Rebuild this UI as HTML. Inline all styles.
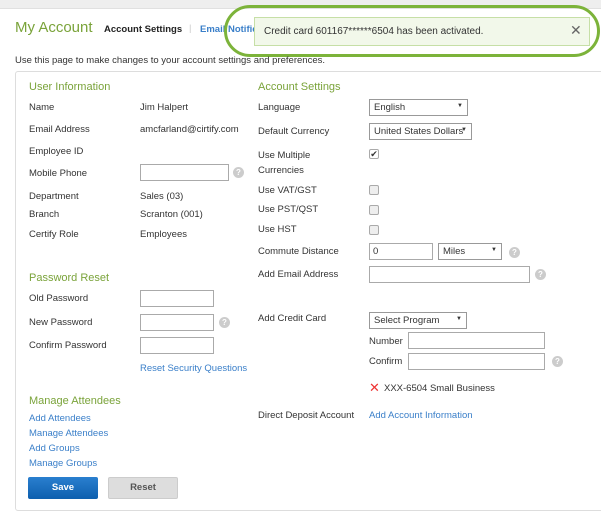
<!DOCTYPE html>
<html><head><style>
*{margin:0;padding:0;box-sizing:border-box}
body{width:601px;height:505px;background:#fff;font-family:"Liberation Sans",sans-serif;font-size:9.5px;color:#333;position:relative;overflow:hidden}
.a{position:absolute;white-space:nowrap}
.g{color:#7aa33a;font-size:11px}
.l{color:#3a7fc9}
.in{position:absolute;border:1px solid #aaa;background:#fff;height:17px}
.sel{position:absolute;border:1px solid #999;background:#fff;height:17px;padding:2px 4px;font-size:9.5px}
.sel:after{content:"▼";position:absolute;right:4px;top:3px;font-size:6px}
.cb{position:absolute;width:10px;height:10px;border:1px solid #aaa;border-radius:2px;background:#eee}
.q{position:absolute;width:11px;height:11px;border-radius:50%;background:#ccc;color:#fff;font-size:8px;text-align:center;line-height:11px;font-weight:bold}
</style></head><body>
<div class="a" style="left:0;top:0;width:601px;height:9px;background:#eee;border-bottom:1px solid #e0e0e0"></div>
<div class="a" style="left:15px;top:19px;font-size:15px;color:#7aa33a">My Account</div>
<div class="a" style="left:104px;top:24px;font-size:9.5px;color:#222;font-weight:bold">Account Settings</div>
<div class="a" style="left:189px;top:23px;color:#ccc">|</div>
<div class="a" style="left:200px;top:24px;font-weight:bold" ><span class="l">Email Notifica</span></div>
<div class="a" style="left:224px;top:5px;width:376px;height:52px;border:3px solid #7cb33a;border-radius:26px"></div>
<div class="a" style="left:254px;top:17px;width:336px;height:29px;background:#f2f8ea;border:1px solid #c6dfa6"></div>
<div class="a" style="left:264px;top:26px;font-size:10px">Credit card 601167******6504 has been activated.</div>
<div class="a" style="left:570px;top:22px;font-size:14px;color:#666">✕</div>
<div class="a" style="left:15px;top:55px">Use this page to make changes to your account settings and preferences.</div>
<div class="a" style="left:15px;top:71px;width:600px;height:440px;border:1px solid #ddd;border-radius:3px"></div>

<div class="a g" style="left:29px;top:81px">User Information</div>
<div class="a" style="left:29px;top:102px">Name</div><div class="a" style="left:140px;top:102px">Jim Halpert</div>
<div class="a" style="left:29px;top:124px">Email Address</div><div class="a" style="left:140px;top:124px">amcfarland@cirtify.com</div>
<div class="a" style="left:29px;top:146px">Employee ID</div>
<div class="a" style="left:29px;top:168px">Mobile Phone</div><div class="in" style="left:140px;top:164px;width:89px"></div><div class="q" style="left:233px;top:167px">?</div>
<div class="a" style="left:29px;top:191px">Department</div><div class="a" style="left:140px;top:191px">Sales (03)</div>
<div class="a" style="left:29px;top:209px">Branch</div><div class="a" style="left:140px;top:209px">Scranton (001)</div>
<div class="a" style="left:29px;top:229px">Certify Role</div><div class="a" style="left:140px;top:229px">Employees</div>

<div class="a g" style="left:29px;top:272px">Password Reset</div>
<div class="a" style="left:29px;top:293px">Old Password</div><div class="in" style="left:140px;top:290px;width:74px"></div>
<div class="a" style="left:29px;top:317px">New Password</div><div class="in" style="left:140px;top:314px;width:74px"></div><div class="q" style="left:219px;top:317px">?</div>
<div class="a" style="left:29px;top:340px">Confirm Password</div><div class="in" style="left:140px;top:337px;width:74px"></div>
<div class="a l" style="left:140px;top:363px">Reset Security Questions</div>

<div class="a g" style="left:29px;top:395px">Manage Attendees</div>
<div class="a l" style="left:29px;top:413px">Add Attendees</div>
<div class="a l" style="left:29px;top:428px">Manage Attendees</div>
<div class="a l" style="left:29px;top:443px">Add Groups</div>
<div class="a l" style="left:29px;top:458px">Manage Groups</div>
<div class="a" style="left:28px;top:477px;width:70px;height:22px;background:linear-gradient(#2a7fcf,#0d5fae);border-radius:2px;color:#fff;font-weight:bold;text-align:center;line-height:22px">Save</div>
<div class="a" style="left:108px;top:477px;width:70px;height:22px;background:#ddd;border:1px solid #ccc;border-radius:2px;color:#555;font-weight:bold;text-align:center;line-height:20px">Reset</div>

<div class="a g" style="left:258px;top:81px">Account Settings</div>
<div class="a" style="left:258px;top:102px">Language</div><div class="sel" style="left:369px;top:99px;width:99px">English</div>
<div class="a" style="left:258px;top:126px">Default Currency</div><div class="sel" style="left:369px;top:123px;width:103px;overflow:hidden">United States Dollars</div>
<div class="a" style="left:258px;top:148px;line-height:15px">Use Multiple<br>Currencies</div>
<div class="cb" style="left:369px;top:149px;background:#fff;font-size:9px;line-height:8px;text-align:center">✔</div>
<div class="a" style="left:258px;top:185px">Use VAT/GST</div><div class="cb" style="left:369px;top:185px"></div>
<div class="a" style="left:258px;top:204px">Use PST/QST</div><div class="cb" style="left:369px;top:205px"></div>
<div class="a" style="left:258px;top:224px">Use HST</div><div class="cb" style="left:369px;top:225px"></div>
<div class="a" style="left:258px;top:246px">Commute Distance</div><div class="in" style="left:369px;top:243px;width:64px;padding:2px 3px">0</div>
<div class="sel" style="left:438px;top:243px;width:64px">Miles</div><div class="q" style="left:509px;top:247px">?</div>
<div class="a" style="left:258px;top:269px">Add Email Address</div><div class="in" style="left:369px;top:266px;width:161px"></div><div class="q" style="left:535px;top:269px">?</div>
<div class="a" style="left:258px;top:313px">Add Credit Card</div><div class="sel" style="left:369px;top:312px;width:98px">Select Program</div>
<div class="a" style="left:369px;top:336px">Number</div><div class="in" style="left:408px;top:332px;width:137px"></div>
<div class="a" style="left:369px;top:356px">Confirm</div><div class="in" style="left:408px;top:353px;width:137px"></div><div class="q" style="left:552px;top:356px">?</div>
<div class="a" style="left:369px;top:380px;color:#e33;font-size:13px">✕</div><div class="a" style="left:384px;top:383px">XXX-6504 Small Business</div>
<div class="a" style="left:258px;top:410px">Direct Deposit Account</div><div class="a l" style="left:369px;top:410px">Add Account Information</div>
</body></html>
